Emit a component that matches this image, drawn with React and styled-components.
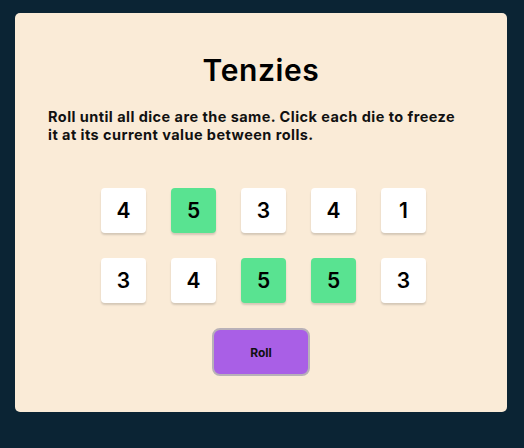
import React from 'react'
import styled, { createGlobalStyle } from 'styled-components'

const GlobalStyle = createGlobalStyle`
  * { box-sizing: border-box; }
  body {
    margin: 0;
    background-color: #0B2434;
    font-family: "Inter", "Noto Sans", sans-serif;
  }
`

const Page = styled.div`
  padding: 13px 17px 36px 15px;
  height: 448px;
`

const Card = styled.main`
  background-color: #FAEBD7;
  border-radius: 5px;
  height: 399px;
  display: flex;
  flex-direction: column;
  align-items: center;
  padding: 39px 33px 0;
`

const Title = styled.h1`
  font-size: 30px;
  font-weight: 600;
  margin: 0;
  line-height: 36px;
  color: #000;
  letter-spacing: 0.6px;
`

const Instructions = styled.p`
  font-size: 14.5px;
  font-weight: 700;
  line-height: 18px;
  margin: 20px 0 0;
  align-self: stretch;
  padding-right: 10px;
  color: #111;
  letter-spacing: 0.45px;
`

const DiceGrid = styled.div`
  display: grid;
  grid-template-columns: repeat(5, 45px);
  gap: 25px;
  margin: 44px 0 0 5px;
`

const Die = styled.div`
  width: 45px;
  height: 45px;
  border-radius: 4px;
  background-color: ${({ $held }) => ($held ? '#59E391' : '#FFFFFF')};
  box-shadow: 0 2px 2px rgba(0, 0, 0, 0.15);
  display: flex;
  align-items: center;
  justify-content: center;
  font-size: 21px;
  font-weight: 600;
  color: #000;
`

const RollButton = styled.button`
  margin-top: 25px;
  width: 98px;
  height: 48px;
  background-color: #A95FE6;
  border: 2px solid #B8B0B8;
  border-radius: 8px;
  font-family: inherit;
  font-size: 12px;
  font-weight: 700;
  color: #111;
  cursor: pointer;
`

const dice = [
  { value: 4, held: false },
  { value: 5, held: true },
  { value: 3, held: false },
  { value: 4, held: false },
  { value: 1, held: false },
  { value: 3, held: false },
  { value: 4, held: false },
  { value: 5, held: true },
  { value: 5, held: true },
  { value: 3, held: false },
]

export default function App() {
  return (
    <>
      <GlobalStyle />
      <Page>
        <Card>
          <Title>Tenzies</Title>
          <Instructions>
            Roll until all dice are the same. Click each die to freeze it at its current value between rolls.
          </Instructions>
          <DiceGrid>
            {dice.map((d, i) => (
              <Die key={i} $held={d.held}>{d.value}</Die>
            ))}
          </DiceGrid>
          <RollButton>Roll</RollButton>
        </Card>
      </Page>
    </>
  )
}
